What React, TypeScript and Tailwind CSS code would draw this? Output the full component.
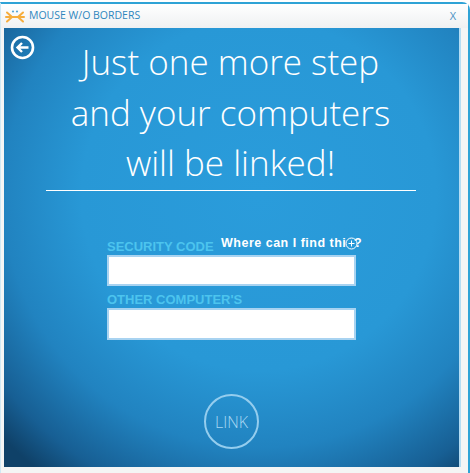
export default function App() {
  return (
    <div className="w-[470px] h-[473px] bg-white overflow-hidden">
      {/* Window frame */}
      <div className="w-[470px] h-[471px] mt-[2px] flex flex-col border-t-2 border-r-2 border-l border-t-[#2fa3d6] border-r-[#2fa3d6] border-l-[#cfe8f4] rounded-tr-lg bg-[#f4f5f5]">
        {/* Title bar */}
        <div className="h-[24px] shrink-0 flex items-center pl-[4px] pr-[12px] bg-gradient-to-b from-white to-[#eff1f2]">
          <svg width="20" height="14" viewBox="0 0 20 14" className="shrink-0">
            <g stroke="#f6ad3c" strokeWidth="2" strokeLinecap="round" fill="none">
              <path d="M2 3.5 L7 8 L2 12.5" />
              <path d="M18 3.5 L13 8 L18 12.5" />
              <path d="M1 8 H19" />
            </g>
            <circle cx="8" cy="2.5" r="1.1" fill="#5aa7d6" />
            <circle cx="12" cy="2.5" r="1.1" fill="#5aa7d6" />
          </svg>
          <span className="ml-[4px] text-[10.5px] text-[#2e86bd] font-['Open_Sans',sans-serif]">MOUSE W/O BORDERS</span>
          <span className="ml-auto text-[11px] text-[#4a93c4] font-['Open_Sans',sans-serif]">X</span>
        </div>

        {/* Main panel */}
        <div className="relative ml-[3px] w-[458px] h-[439px] flex">
          <div className="w-[455px] h-full flex flex-col items-center bg-[radial-gradient(ellipse_78%_80%_at_56%_38%,#2a9cdb_0%,#2898d6_50%,#2183c0_72%,#175f94_90%,#0f4168_100%)]">
            <button className="absolute left-[6px] top-[7px] w-[25px] h-[25px]">
              <svg width="25" height="25" viewBox="0 0 25 25" fill="none" stroke="white">
                <circle cx="12.5" cy="12.5" r="10.5" strokeWidth="2.6" />
                <path d="M18.5 12.5 H7.5 M12 8 L7.5 12.5 L12 17" strokeWidth="2.4" />
              </svg>
            </button>

            <div className="mt-[9px] -ml-[2px] w-[370px] h-[154px] border-b border-white text-center text-white text-[35px] leading-[50.5px] font-light font-['Open_Sans',sans-serif]">
              <div>Just one more step</div>
              <div>and your computers</div>
              <div>will be linked!</div>
            </div>

            {/* Form */}
            <div className="mt-[47px] w-[249px] flex flex-col font-['Liberation_Sans',sans-serif]">
              <div className="relative h-[17px] text-[13px] leading-[17px] text-[#4cc4ee] font-bold">
                SECURITY CODE
                <span className="absolute left-[114px] -top-[3px] whitespace-nowrap font-bold text-[12.5px] text-white tracking-[0.5px]">Where can I find thi</span>
                <span className="absolute left-[247px] -top-[3px] font-bold text-[12.5px] text-white">?</span>
                <svg width="13" height="13" viewBox="0 0 13 13" fill="none" stroke="white" className="absolute left-[238px] -top-[1px]">
                  <circle cx="6.5" cy="6.5" r="5.5" />
                  <path d="M6.5 3.5 V9.5 M3.5 6.5 H9.5" />
                </svg>
              </div>
              <div className="h-[31px] bg-white border-2 border-[#a8d3f1]" />
              <div className="h-[22px] pt-[5px] text-[13px] leading-[17px] text-[#4cc4ee] font-bold">OTHER COMPUTER'S</div>
              <div className="h-[32px] bg-white border-2 border-[#a8d3f1]" />
            </div>

            <button className="mt-[54px] w-[55px] h-[55px] rounded-full border-2 border-[#94cdee] text-[16px] text-[#a9d8f3] font-light font-['Open_Sans',sans-serif]">
              LINK
            </button>
          </div>
          <div className="w-[2px] h-full bg-[#b5ddf4]" />
        </div>
      </div>
    </div>
  )
}
